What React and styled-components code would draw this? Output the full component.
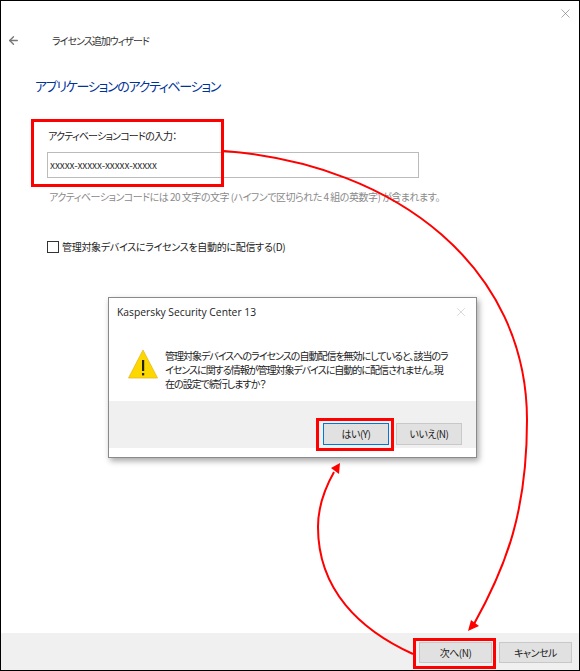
import styled, { createGlobalStyle } from "styled-components";
import { ArrowLeft, X } from "lucide-react";

const GlobalStyle = createGlobalStyle`
  html, body {
    margin: 0;
    padding: 0;
    background: #fff;
  }
`;

function App() {
  return (
    <Wizard>
      <GlobalStyle />
      <TopBar>
        <BackIcon size={13} strokeWidth={2.5} />
        <WizardTitle>ライセンス追加ウィザード</WizardTitle>
        <CloseIcon size={15} strokeWidth={1} />
      </TopBar>

      <Content>
        <Heading>アプリケーションのアクティベーション</Heading>
        <FieldLabel>アクティベーションコードの入力：</FieldLabel>
        <CodeField>xxxxx-xxxxx-xxxxx-xxxxx</CodeField>
        <Hint>アクティベーションコードには 20 文字の文字 (ハイフンで区切られた 4 組の英数字) が含まれます。</Hint>
        <CheckRow>
          <CheckBox />
          <CheckLabel>管理対象デバイスにライセンスを自動的に配信する(D)</CheckLabel>
        </CheckRow>
      </Content>

      <Footer>
        <FooterButton>次へ(N)</FooterButton>
        <FooterButton>キャンセル</FooterButton>
      </Footer>

      <Dialog>
        <DialogHead>
          <DialogTitle>Kaspersky Security Center 13</DialogTitle>
          <DialogClose size={14} strokeWidth={1} />
        </DialogHead>
        <DialogBody>
          <WarningIcon width="30" height="30" viewBox="0 0 30 30">
            <path d="M15 1 L29.5 29 L0.5 29 Z" fill="#fcd800" stroke="#e8b820" strokeWidth="0.8" />
            <rect x="14" y="11" width="2.2" height="11" fill="#222" />
            <rect x="14" y="24" width="2.2" height="2.4" fill="#222" />
          </WarningIcon>
          <Message>
            管理対象デバイスへのライセンスの自動配信を無効にしていると、該当のラ
            <br />
            イセンスに関する情報が管理対象デバイスに自動的に配信されません。現
            <br />
            在の設定で続行しますか？
          </Message>
        </DialogBody>
        <DialogActions>
          <DialogButton $primary>はい(Y)</DialogButton>
          <DialogButton>いいえ(N)</DialogButton>
        </DialogActions>
      </Dialog>

      <Callout $x={31} $y={119} $w={193} $h={68} />
      <Callout $x={316} $y={418} $w={78} $h={33} />
      <Callout $x={413} $y={638} $w={83} $h={31} />

      <Arrows width="580" height="671" viewBox="0 0 580 671">
        <path d="M224 151 C 400 165, 527 270, 527 420 C 527 510, 507 565, 474 624" fill="none" stroke="#f00" strokeWidth="2" />
        <path d="M468 631 L471 620 L479 626 Z" fill="#f00" />
        <path d="M413 654 C 360 630, 318 590, 318 527 C 318 505, 325 488, 334 472" fill="none" stroke="#f00" strokeWidth="2" />
        <path d="M340 463 L339 474 L331 468 Z" fill="#f00" />
      </Arrows>
    </Wizard>
  );
}

export default App;

const Wizard = styled.div`
  position: relative;
  box-sizing: border-box;
  width: 580px;
  height: 671px;
  border: 1px solid #000;
  background: #fff;
  display: flex;
  flex-direction: column;
  overflow: hidden;
  font-family: "Noto Sans CJK JP", "Open Sans", sans-serif;
  font-feature-settings: "palt";
  color: #222;
`;

const TopBar = styled.div`
  display: flex;
  align-items: center;
  height: 78px;
  padding-left: 6px;
`;

const BackIcon = styled(ArrowLeft)`
  color: #777;
`;

const WizardTitle = styled.div`
  margin-left: 32px;
  font-size: 10px;
  letter-spacing: -1px;
  color: #333;
`;

const CloseIcon = styled(X)`
  position: absolute;
  top: 5px;
  right: 6px;
  color: #777;
`;

const Content = styled.div`
  flex: 1;
  display: flex;
  flex-direction: column;
  align-items: flex-start;
  padding-left: 34px;
`;

const Heading = styled.h1`
  margin: 0;
  font-size: 13px;
  line-height: 14px;
  font-weight: 400;
  letter-spacing: -1.3px;
  color: #003399;
`;

const FieldLabel = styled.label`
  margin: 36px 0 0 13px;
  font-size: 10px;
  line-height: 14px;
  letter-spacing: -0.8px;
`;

const CodeField = styled.div`
  box-sizing: border-box;
  width: 372px;
  height: 26px;
  margin: 9px 0 0 12px;
  padding-left: 2px;
  border: 1px solid #bbb;
  font-size: 10px;
  letter-spacing: -0.1px;
  line-height: 24px;
  color: #333;
`;

const Hint = styled.p`
  margin: 12px 0 0 14px;
  font-size: 10px;
  line-height: 14px;
  letter-spacing: -0.5px;
  color: #8a8a8a;
  white-space: nowrap;
`;

const CheckRow = styled.div`
  display: flex;
  align-items: center;
  gap: 3px;
  margin: 36px 0 0 12px;
`;

const CheckBox = styled.span`
  box-sizing: border-box;
  width: 12px;
  height: 12px;
  border: 1px solid #333;
`;

const CheckLabel = styled.span`
  font-size: 10px;
  line-height: 14px;
  letter-spacing: -0.3px;
`;

const Footer = styled.div`
  display: flex;
  justify-content: flex-end;
  gap: 7px;
  height: 37px;
  padding: 9px 7px 0 0;
  box-sizing: border-box;
  background: #f0f0f0;
`;

const FooterButton = styled.div`
  box-sizing: border-box;
  width: 73px;
  height: 21px;
  border: 1px solid #c8c8c8;
  background: #e1e1e1;
  font-size: 10px;
  letter-spacing: -0.5px;
  line-height: 19px;
  text-align: center;
`;

const Dialog = styled.div`
  position: absolute;
  left: 107px;
  top: 296px;
  box-sizing: border-box;
  width: 369px;
  height: 161px;
  border: 1px solid #8a8a8a;
  background: #fff;
  box-shadow: 2px 3px 6px rgba(0, 0, 0, 0.35);
  display: flex;
  flex-direction: column;
`;

const DialogHead = styled.div`
  display: flex;
  align-items: center;
  justify-content: space-between;
  height: 27px;
  padding: 0 8px;
`;

const DialogTitle = styled.div`
  font-family: "Open Sans", sans-serif;
  font-size: 10.3px;
  color: #222;
`;

const DialogClose = styled(X)`
  color: #bbb;
`;

const DialogBody = styled.div`
  display: flex;
  align-items: flex-start;
  gap: 7px;
  height: 76px;
  padding: 24px 0 0 19px;
  box-sizing: border-box;
`;

const WarningIcon = styled.svg`
  flex-shrink: 0;
`;

const Message = styled.div`
  font-size: 10px;
  line-height: 14px;
  letter-spacing: -1px;
  white-space: nowrap;
`;

const DialogActions = styled.div`
  display: flex;
  justify-content: flex-end;
  gap: 7px;
  height: 47px;
  padding: 22px 14px 0 0;
  box-sizing: border-box;
  background: #f0f0f0;
`;

const DialogButton = styled.div`
  box-sizing: border-box;
  width: 66px;
  height: 22px;
  border: 1px solid ${(p) => (p.$primary ? "#0078d7" : "#c8c8c8")};
  background: #e1e1e1;
  font-size: 10px;
  letter-spacing: -0.5px;
  line-height: 20px;
  text-align: center;
`;

const Callout = styled.div`
  position: absolute;
  left: ${(p) => p.$x - 1}px;
  top: ${(p) => p.$y - 1}px;
  width: ${(p) => p.$w}px;
  height: ${(p) => p.$h}px;
  box-sizing: border-box;
  border: 3px solid #f00;
`;

const Arrows = styled.svg`
  position: absolute;
  left: -1px;
  top: -1px;
  pointer-events: none;
`;
